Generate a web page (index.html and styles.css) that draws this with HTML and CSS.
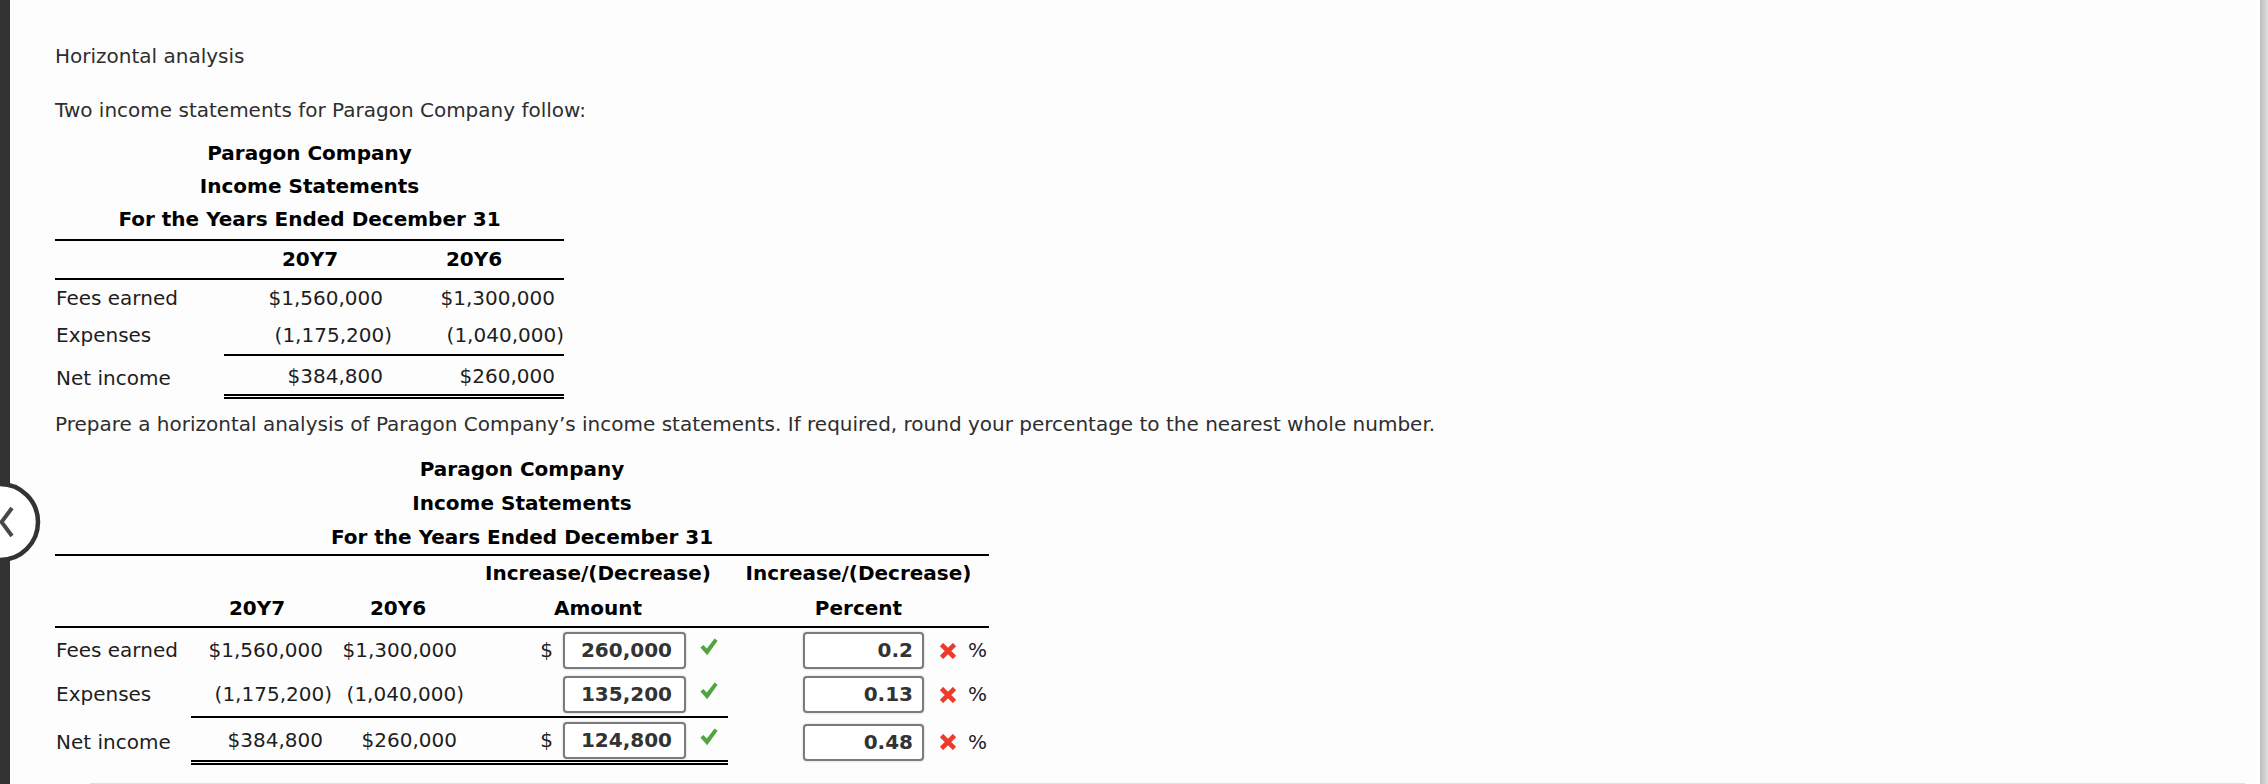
FILE: index.html
```html
<!DOCTYPE html>
<html lang="en">
<head>
<meta charset="utf-8">
<title>Horizontal analysis</title>
<link rel="stylesheet" href="styles.css">
</head>
<body>
<div class="page">
  <div class="leftbar"></div>
  <main class="content">
    <p class="heading">Horizontal analysis</p>
    <p class="intro">Two income statements for Paragon Company follow:</p>

    <div class="statement statement-small">
      <div class="titles">
        <div>Paragon Company</div>
        <div>Income Statements</div>
        <div>For the Years Ended December 31</div>
      </div>
      <table class="fin fin-small">
        <colgroup>
          <col class="w-label">
          <col class="w-a">
          <col class="w-b">
        </colgroup>
        <thead>
          <tr>
            <th></th>
            <th class="a">20Y7</th>
            <th class="b">20Y6</th>
          </tr>
        </thead>
        <tbody>
          <tr>
            <td class="label">Fees earned</td>
            <td class="a">$1,560,000</td>
            <td class="b">$1,300,000</td>
          </tr>
          <tr>
            <td class="label">Expenses</td>
            <td class="a neg">(1,175,200)</td>
            <td class="b neg">(1,040,000)</td>
          </tr>
          <tr class="total">
            <td class="label">Net income</td>
            <td class="a">$384,800</td>
            <td class="b">$260,000</td>
          </tr>
        </tbody>
      </table>
    </div>

    <p class="prompt">Prepare a horizontal analysis of Paragon Company’s income statements. If required, round your percentage to the nearest whole number.</p>

    <div class="statement statement-large">
      <div class="titles">
        <div>Paragon Company</div>
        <div>Income Statements</div>
        <div>For the Years Ended December 31</div>
      </div>
      <table class="fin fin-large">
        <colgroup>
          <col class="w-label">
          <col class="w-a">
          <col class="w-b">
          <col class="w-amt">
          <col class="w-pct">
        </colgroup>
        <thead>
          <tr class="head-top">
            <th></th>
            <th></th>
            <th></th>
            <th>Increase/(Decrease)</th>
            <th>Increase/(Decrease)</th>
          </tr>
          <tr class="head-bottom">
            <th></th>
            <th class="a">20Y7</th>
            <th class="b">20Y6</th>
            <th>Amount</th>
            <th>Percent</th>
          </tr>
        </thead>
        <tbody>
          <tr>
            <td class="label">Fees earned</td>
            <td class="a">$1,560,000</td>
            <td class="b">$1,300,000</td>
            <td class="amt">
              <div class="entry">
                <span class="cur">$</span>
                <span class="box box-amt">260,000</span>
                <svg class="check" viewBox="0 0 18 18" aria-hidden="true"><path d="M0.4 9.6 L3.4 7 L6.8 10.6 L14.6 0.4 L17.6 2.8 L7.2 17.2 Z"/></svg>
              </div>
            </td>
            <td class="pct">
              <div class="entry">
                <span class="box box-pct">0.2</span>
                <svg class="cross" viewBox="0 0 18 16" aria-hidden="true"><path d="M2.5 1.5 L15.5 14.5 M15.5 1.5 L2.5 14.5"/></svg>
                <span class="unit">%</span>
              </div>
            </td>
          </tr>
          <tr>
            <td class="label">Expenses</td>
            <td class="a neg">(1,175,200)</td>
            <td class="b neg">(1,040,000)</td>
            <td class="amt">
              <div class="entry">
                <span class="box box-amt">135,200</span>
                <svg class="check" viewBox="0 0 18 18" aria-hidden="true"><path d="M0.4 9.6 L3.4 7 L6.8 10.6 L14.6 0.4 L17.6 2.8 L7.2 17.2 Z"/></svg>
              </div>
            </td>
            <td class="pct">
              <div class="entry">
                <span class="box box-pct">0.13</span>
                <svg class="cross" viewBox="0 0 18 16" aria-hidden="true"><path d="M2.5 1.5 L15.5 14.5 M15.5 1.5 L2.5 14.5"/></svg>
                <span class="unit">%</span>
              </div>
            </td>
          </tr>
          <tr class="total">
            <td class="label">Net income</td>
            <td class="a">$384,800</td>
            <td class="b">$260,000</td>
            <td class="amt">
              <div class="entry">
                <span class="cur">$</span>
                <span class="box box-amt">124,800</span>
                <svg class="check" viewBox="0 0 18 18" aria-hidden="true"><path d="M0.4 9.6 L3.4 7 L6.8 10.6 L14.6 0.4 L17.6 2.8 L7.2 17.2 Z"/></svg>
              </div>
            </td>
            <td class="pct">
              <div class="entry">
                <span class="box box-pct">0.48</span>
                <svg class="cross" viewBox="0 0 18 16" aria-hidden="true"><path d="M2.5 1.5 L15.5 14.5 M15.5 1.5 L2.5 14.5"/></svg>
                <span class="unit">%</span>
              </div>
            </td>
          </tr>
        </tbody>
      </table>
    </div>

    <div class="footer-rule"></div>
  </main>
  <div class="scrollbar"></div>

  <svg class="back-btn" viewBox="0 0 46 84" aria-hidden="true">
    <circle cx="0" cy="42" r="38" />
    <polyline points="12,28 1.5,42 12,56" />
  </svg>
</div>
</body>
</html>
```

FILE: styles.css
```css
* {
  box-sizing: border-box;
}

html,
body {
  margin: 0;
  height: 784px;
}

body {
  font-family: "DejaVu Sans", Verdana, sans-serif;
  font-size: 20px;
  color: #2e2e2e;
  background: #fdfdfd;
  overflow: hidden;
}

.page {
  position: relative;
  display: flex;
  height: 784px;
}

.leftbar {
  flex: none;
  width: 10px;
  background: #333;
}

.scrollbar {
  flex: none;
  width: 8px;
  background: linear-gradient(to right, #bdbdbd, #dedede);
}

.content {
  flex: 1;
  display: flex;
  flex-direction: column;
  align-items: flex-start;
  padding: 42px 0 0 45px;
}

.heading,
.intro,
.prompt {
  margin: 0;
  line-height: 28px;
  white-space: nowrap;
}

.intro {
  margin-top: 26px;
}

.prompt {
  margin-top: 11px;
}

/* statements */
.statement {
  display: flex;
  flex-direction: column;
  align-items: center;
}

.titles {
  text-align: center;
  font-weight: bold;
  color: #000;
  white-space: nowrap;
}

.statement-small {
  margin-top: 13px;
}

.statement-small .titles {
  line-height: 33px;
}

.statement-large {
  margin-top: 14px;
}

.statement-large .titles {
  line-height: 34px;
}

.fin {
  border-collapse: separate;
  border-spacing: 0;
  table-layout: fixed;
  color: #1e1e1e;
}

.fin th,
.fin td {
  padding: 0;
  line-height: 25px;
  white-space: nowrap;
}

.fin th {
  font-weight: bold;
  color: #000;
  text-align: center;
}

.fin td.label {
  text-align: left;
  padding-left: 1px;
}

.fin td.a,
.fin td.b {
  text-align: right;
}

/* small table */
.fin-small {
  width: 509px;
  margin-top: 3px;
}

.fin-small .w-label { width: 169px; }
.fin-small .w-a { width: 172px; }
.fin-small .w-b { width: 168px; }

.fin-small th {
  padding: 6px 0;
  border-top: 2px solid #000;
  border-bottom: 2px solid #000;
}

.fin-small th.b {
  padding-right: 12px;
}

.fin-small td {
  padding-top: 6px;
  padding-bottom: 6px;
}

.fin-small td.a { padding-right: 13px; }
.fin-small td.a.neg { padding-right: 4px; }
.fin-small td.b { padding-right: 9px; }
.fin-small td.b.neg { padding-right: 0; }

.fin-small .total td {
  padding-top: 8px;
  padding-bottom: 5px;
}

.fin-small .total td.a,
.fin-small .total td.b {
  border-top: 2px solid #000;
  border-bottom: 5px double #000;
}

/* large table */
.fin-large {
  width: 934px;
}

.fin-large .w-label { width: 136px; }
.fin-large .w-a { width: 144px; }
.fin-large .w-b { width: 133px; }
.fin-large .w-amt { width: 260px; }
.fin-large .w-pct { width: 261px; }

.fin-large th {
  padding: 5px 0;
}

.fin-large .head-top th {
  border-top: 2px solid #000;
}

.fin-large .head-bottom th {
  border-bottom: 2px solid #000;
}

.fin-large .head-bottom th.a { padding-right: 12px; }
.fin-large .head-bottom th.b { padding-right: 7px; }

.fin-large td {
  padding-top: 4px;
  padding-bottom: 3px;
}

.fin-large td.a { padding-right: 12px; }
.fin-large td.a.neg { padding-right: 3px; }
.fin-large td.b { padding-right: 11px; }
.fin-large td.b.neg { padding-right: 4px; }

.fin-large .total td {
  padding-bottom: 1px;
}

.fin-large .total td.a,
.fin-large .total td.b,
.fin-large .total td.amt {
  border-top: 2px solid #000;
  border-bottom: 5px double #000;
}

/* answer entries */
.entry {
  display: flex;
  align-items: center;
  justify-content: flex-end;
}

.cur {
  margin-right: 10px;
  color: #1e1e1e;
}

.box {
  display: block;
  height: 37px;
  border: 2px solid #7b7b7b;
  border-radius: 4px;
  background: #fff;
  box-shadow: 0 0 2px rgba(0, 0, 0, 0.25);
  font-weight: bold;
  color: #333;
  text-align: right;
  line-height: 33px;
}

.box-amt {
  width: 123px;
  padding-right: 12px;
}

.box-pct {
  width: 121px;
  padding-right: 9px;
}

.check {
  width: 18px;
  height: 18px;
  margin: 0 10px 8px 14px;
  fill: #52a443;
}

.cross {
  width: 18px;
  height: 16px;
  margin-left: 15px;
  fill: none;
  stroke: #ec3b2d;
  stroke-width: 4.6;
}

.unit {
  margin-left: 11px;
  margin-right: 2px;
  color: #1e1e1e;
}

.footer-rule {
  align-self: stretch;
  margin-top: auto;
  margin-left: 35px;
  margin-right: 15px;
  height: 1px;
  background: #dde1e3;
}

.back-btn {
  position: absolute;
  left: 0;
  top: 480px;
  width: 46px;
  height: 84px;
}

.back-btn circle {
  fill: #fff;
  stroke: #333;
  stroke-width: 4.5;
}

.back-btn polyline {
  fill: none;
  stroke: #484848;
  stroke-width: 4;
}
```
